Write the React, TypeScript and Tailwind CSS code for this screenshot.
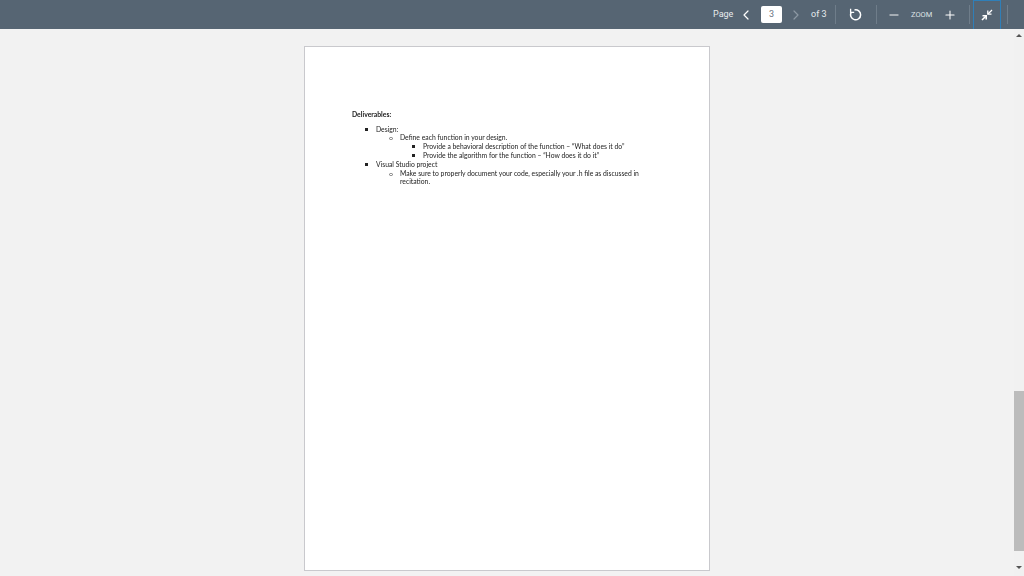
import { ChevronLeft, ChevronRight, Minus, Plus } from "lucide-react"

function Sep({ className }: { className: string }) {
  return <div className={`h-[19px] w-px bg-[#6f7d8a] ${className}`} />
}

function ShrinkIcon() {
  return (
    <svg width="14" height="14" viewBox="0 0 14 14" fill="none" stroke="#ffffff" strokeWidth="1.3">
      <path d="M8 6 L12 2" />
      <path d="M7.8 2.5 V6.2 H11.5" />
      <path d="M6 8 L2 12" strokeWidth="1.6" />
      <path d="M2.5 7.8 H6.2 V11.5" strokeWidth="1.6" />
    </svg>
  )
}

function RotateIcon() {
  return (
    <svg width="13" height="13" viewBox="0 0 13 13" fill="none" stroke="#ffffff" strokeWidth="1.5">
      <path d="M5.5 1.9 A5 5 0 1 1 2.2 4.4" />
      <path d="M1.6 0.8 V4.4 H5.2" strokeWidth="1.3" />
    </svg>
  )
}

function Toolbar() {
  return (
    <div className="flex h-[29px] shrink-0 items-center bg-[#566573] pl-[713px] text-white">
      <span className="w-5 text-[9px] text-[#e8ebee]">Page</span>
      <ChevronLeft className="ml-[5px] h-[16px] w-[16px]" strokeWidth={1.8} />
      <div className="ml-[7px] flex h-[17px] w-[21px] items-center justify-center rounded-[2px] bg-white text-[9px] text-[#6b7480]">
        3
      </div>
      <ChevronRight className="ml-[6px] h-[16px] w-[16px] text-[#8c98a3]" strokeWidth={1.8} />
      <span className="ml-[7px] w-[15px] whitespace-nowrap text-[9px] text-[#e8ebee]">of 3</span>
      <Sep className="ml-[9px]" />
      <div className="ml-[13px]">
        <RotateIcon />
      </div>
      <Sep className="ml-[14px]" />
      <Minus className="ml-[10px] h-[14px] w-[14px]" strokeWidth={1.6} />
      <span className="ml-[10px] w-[22px] text-[7.5px] text-[#dfe3e7]">ZOOM</span>
      <Plus className="ml-[10px] h-[14px] w-[14px]" strokeWidth={1.8} />
      <Sep className="ml-[12px]" />
      <div className="ml-[3px] flex h-[29px] w-[28px] items-center justify-center border-x border-t border-[#2f7fb8]">
        <ShrinkIcon />
      </div>
      <Sep className="ml-[6px]" />
    </div>
  )
}

function Bullet() {
  return <span className="absolute left-[-11px] top-[2px] h-[3px] w-[3px] bg-[#222]" />
}

function Ring() {
  return <span className="absolute left-[-11px] top-[3px] h-[3px] w-[4px] rounded-full border border-[#777]" />
}

function Sheet() {
  return (
    <div className="mt-[17px] h-[525px] w-[406px] shrink-0 border border-[#c9c9cd] bg-white pl-[47px] pt-[64px] font-['Lato',sans-serif] text-[6.8px] text-[#222]">
      <div className="blur-[0.35px]">
        <p className="h-[7px] font-bold leading-[7px]">Deliverables:</p>
        <div className="pl-[24px] pt-[8px] leading-[7px]">
          <p className="relative h-[8px]">
            <Bullet />
            Design:
          </p>
          <p className="relative ml-[24px] h-[9px]">
            <Ring />
            Define each function in your design.
          </p>
          <p className="relative ml-[47px] h-[9px] whitespace-nowrap">
            <Bullet />
            Provide a behavioral description of the function – “What does it do”
          </p>
          <p className="relative ml-[47px] h-[9px] whitespace-nowrap">
            <Bullet />
            Provide the algorithm for the function – “How does it do it”
          </p>
          <p className="relative h-[9px]">
            <Bullet />
            Visual Studio project
          </p>
          <p className="relative ml-[24px] h-[8px] whitespace-nowrap">
            <Ring />
            Make sure to properly document your code, especially your .h file as discussed in
          </p>
          <p className="ml-[24px]">recitation.</p>
        </div>
      </div>
    </div>
  )
}

function Scrollbar() {
  return (
    <div className="flex w-[10px] shrink-0 flex-col items-center bg-[#f1f1f1]">
      <div className="mt-[5px] h-0 w-0 border-x-[3px] border-b-[3px] border-x-transparent border-b-[#555]" />
      <div className="mt-[354px] h-[160px] w-[10px] bg-[#bcbcbc]" />
      <div className="mt-[15px] h-0 w-0 border-x-[3px] border-t-[3px] border-x-transparent border-t-[#555]" />
    </div>
  )
}

export default function App() {
  return (
    <div className="flex h-[576px] w-[1024px] flex-col overflow-hidden bg-[#f2f2f2] font-['Roboto',sans-serif]">
      <Toolbar />
      <div className="flex min-h-0 flex-1">
        <div className="flex-1 pl-[304px]">
          <Sheet />
        </div>
        <Scrollbar />
      </div>
    </div>
  )
}
